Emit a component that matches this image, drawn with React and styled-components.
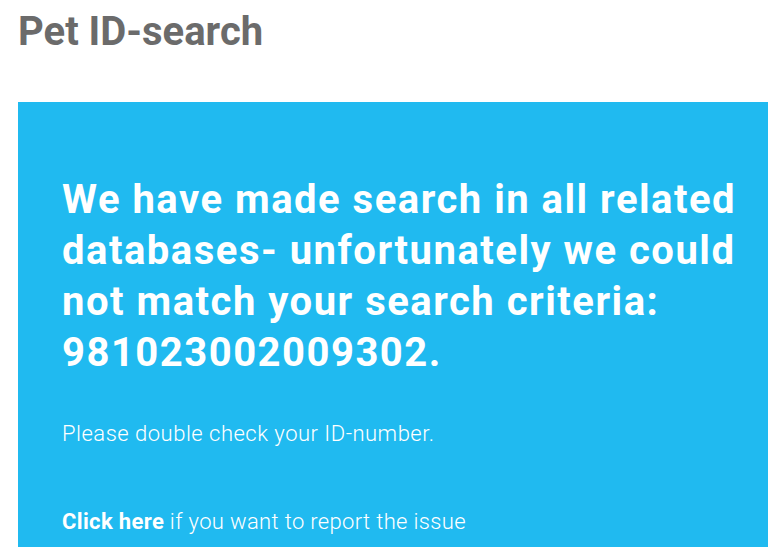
import styled, { createGlobalStyle } from "styled-components";

const GlobalStyle = createGlobalStyle`
  html, body {
    margin: 0;
    padding: 0;
    background: #ffffff;
    font-family: Roboto, "Liberation Sans", sans-serif;
  }
`;

const Page = styled.div`
  display: flex;
  flex-direction: column;
  padding-left: 18px;
  overflow: hidden;
`;

const Title = styled.h1`
  margin: 0;
  padding-top: 8px;
  height: 94px;
  font-size: 40px;
  font-weight: 700;
  line-height: 48px;
  color: #6b6b6b;
  letter-spacing: 0;
`;

const Panel = styled.section`
  background: #20baf0;
  color: #ffffff;
  padding: 72px 20px 8px 44px;
  min-height: 445px;
  box-sizing: border-box;
`;

const Message = styled.h2`
  margin: 0;
  font-size: 40px;
  font-weight: 700;
  line-height: 51px;
  letter-spacing: 1.5px;
`;

const Note = styled.p`
  margin: 42px 0 0;
  font-size: 22px;
  font-weight: 300;
  line-height: 28px;
  letter-spacing: 0.5px;
`;

const Report = styled.p`
  margin: 60px 0 0;
  font-size: 22px;
  font-weight: 300;
  line-height: 28px;
  letter-spacing: 0.35px;

  a {
    color: inherit;
    font-weight: 700;
    text-decoration: none;
  }
`;

export default function App() {
  return (
    <>
      <GlobalStyle />
      <Page>
        <Title>Pet ID-search</Title>
        <Panel>
          <Message>
            We have made search in all related databases- unfortunately we could
            not match your search criteria: 981023002009302.
          </Message>
          <Note>Please double check your ID-number.</Note>
          <Report>
            <a href="#report">Click here</a> if you want to report the issue
          </Report>
        </Panel>
      </Page>
    </>
  );
}
